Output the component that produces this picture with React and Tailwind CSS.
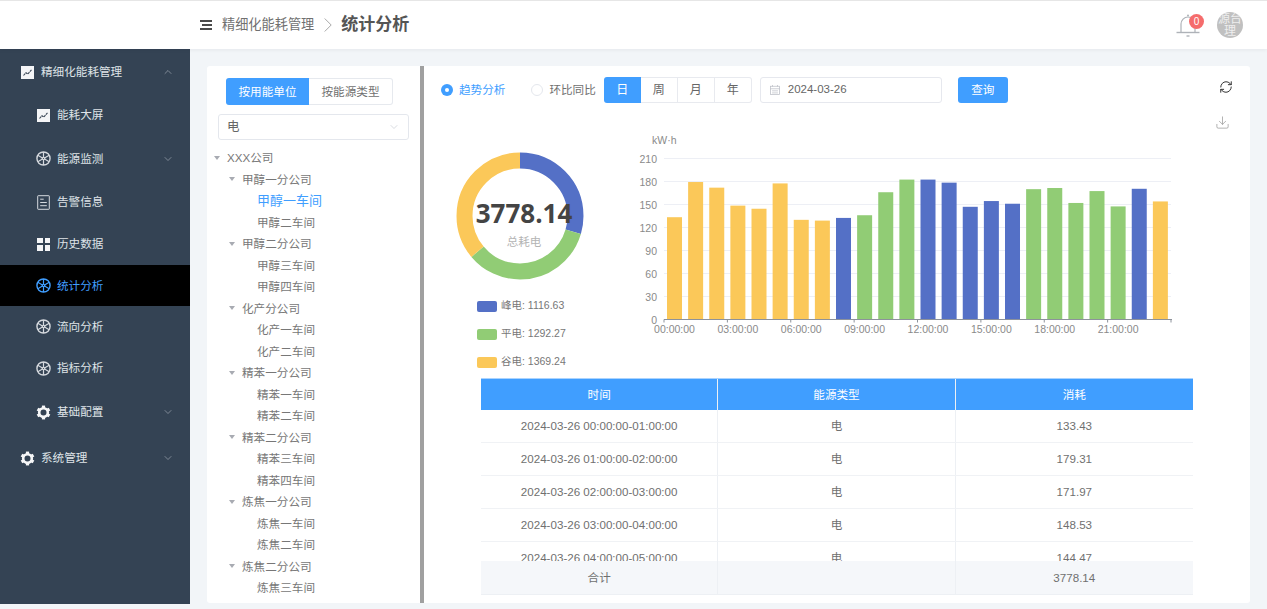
import React from "react";
import { ChevronDown, ChevronUp, RefreshCw, Download } from "lucide-react";

const FONT = "font-['Liberation_Sans','Noto_Sans_CJK_SC',sans-serif]";

const TrendIcon = () => (
  <svg viewBox="0 0 13 13" className="w-[13px] h-[13px]">
    <rect width="13" height="13" fill="#f4f5f7" />
    <path d="M2.5 9.5 5 6.8 6.8 8 10.5 3.8" fill="none" stroke="#3a4756" strokeWidth="1.1" strokeDasharray="2.4 0.6" />
  </svg>
);

const WheelIcon = ({ color = "#d5d9de" }) => (
  <svg viewBox="0 0 16 16" className="w-[15px] h-[15px]" fill="none" stroke={color} strokeWidth="1.3">
    <circle cx="8" cy="8" r="7" strokeWidth="1.5" />
    <circle cx="8" cy="8" r="1.3" />
    <path d="M8 1v5.7M8 9.3V15M1.9 4.5l5 2.9M9.1 8.6l5 2.9M14.1 4.5l-5 2.9M6.9 8.6l-5 2.9" />
  </svg>
);

const DocIcon = () => (
  <svg viewBox="0 0 13 15" className="w-[13px] h-[15px]" fill="none" stroke="#d5d9de" strokeWidth="1">
    <rect x="0.7" y="0.7" width="11.6" height="13.6" rx="0.5" />
    <path d="M3.2 4.2h3.5M3.2 7.5h6.6M3.2 10.7h6.6" />
  </svg>
);

const GridIcon = () => (
  <div className="grid grid-cols-2 gap-[2px] w-[13px] h-[13px]">
    <span className="bg-[#f4f5f7]" />
    <span className="bg-[#f4f5f7]" />
    <span className="bg-[#f4f5f7]" />
    <span className="bg-[#f4f5f7]" />
  </div>
);

const GearIcon = () => (
  <svg viewBox="0 0 16 16" className="w-[15px] h-[15px]" fill="none" stroke="#f6f7f8">
    <circle cx="8" cy="8" r="4.6" strokeWidth="2.8" />
    {[0, 60, 120, 180, 240, 300].map((a) => (
      <path key={a} d="M8 0.6v3" strokeWidth="3.4" transform={`rotate(${a} 8 8)`} />
    ))}
  </svg>
);

const BellIcon = () => (
  <svg viewBox="0 0 24 24" className="w-[24px] h-[24px]" fill="none" stroke="#aeb2b8" strokeWidth="1.2">
    <path d="M5 19v-8a7 7 0 0 1 14 0v8" />
    <path d="M0.5 19.5h23" strokeWidth="1.4" />
    <path d="M10.5 23h3" strokeWidth="1.4" />
    <circle cx="12" cy="2.6" r="1" fill="#aeb2b8" stroke="none" />
  </svg>
);

const menu = [
  { label: "精细化能耗管理", icon: <TrendIcon />, level: 0, arrow: "up", h: "h-[44px]" },
  { label: "能耗大屏", icon: <TrendIcon />, level: 1, h: "h-[42px]" },
  { label: "能源监测", icon: <WheelIcon />, level: 1, arrow: "down", h: "h-[45px]" },
  { label: "告警信息", icon: <DocIcon />, level: 1, h: "h-[42px]" },
  { label: "历史数据", icon: <GridIcon />, level: 1, h: "h-[42px]" },
  { label: "统计分析", icon: <WheelIcon color="#409eff" />, level: 1, active: true, h: "h-[41px]" },
  { label: "流向分析", icon: <WheelIcon />, level: 1, h: "h-[41px]" },
  { label: "指标分析", icon: <WheelIcon />, level: 1, h: "h-[42px]" },
  { label: "基础配置", icon: <GearIcon />, level: 1, arrow: "down", h: "h-[46px]" },
  { label: "系统管理", icon: <GearIcon />, level: 0, arrow: "down", h: "h-[46px]" },
];

const tree = [
  ["XXX公司", 0],
  ["甲醇一分公司", 1],
  ["甲醇一车间", 2, true],
  ["甲醇二车间", 2],
  ["甲醇二分公司", 1],
  ["甲醇三车间", 2],
  ["甲醇四车间", 2],
  ["化产分公司", 1],
  ["化产一车间", 2],
  ["化产二车间", 2],
  ["精苯一分公司", 1],
  ["精苯一车间", 2],
  ["精苯二车间", 2],
  ["精苯二分公司", 1],
  ["精苯三车间", 2],
  ["精苯四车间", 2],
  ["炼焦一分公司", 1],
  ["炼焦一车间", 2],
  ["炼焦二车间", 2],
  ["炼焦二分公司", 1],
  ["炼焦三车间", 2],
];

const BLUE = "#5470c6";
const GREEN = "#91cc75";
const YELLOW = "#fbc859";

const bars = [
  [133.43, YELLOW], [179.31, YELLOW], [171.97, YELLOW], [148.53, YELLOW], [144.47, YELLOW], [177.5, YELLOW],
  [130, YELLOW], [129, YELLOW], [132.5, BLUE], [136, GREEN], [166, GREEN], [182.5, GREEN],
  [182.5, BLUE], [178.5, BLUE], [147, BLUE], [154.5, BLUE], [151, BLUE], [170, GREEN],
  [171.5, GREEN], [152, GREEN], [167.5, GREEN], [147.5, GREEN], [170.5, BLUE], [154, YELLOW],
];

const rows = [
  ["2024-03-26 00:00:00-01:00:00", "电", "133.43"],
  ["2024-03-26 01:00:00-02:00:00", "电", "179.31"],
  ["2024-03-26 02:00:00-03:00:00", "电", "171.97"],
  ["2024-03-26 03:00:00-04:00:00", "电", "148.53"],
  ["2024-03-26 04:00:00-05:00:00", "电", "144.47"],
];

const BarChart = () => {
  const x0 = 34;
  const x1 = 541;
  const base = 185.5;
  const scale = 161 / 210;
  const step = (x1 - x0) / 24;
  return (
    <svg viewBox="0 0 560 200" className="w-[560px] h-[200px] shrink-0">
      <text x="22" y="10" fontSize="10.5" fill="#8a8a8a" textAnchor="start">kW·h</text>
      {[0, 30, 60, 90, 120, 150, 180, 210].map((v) => {
        const y = base - v * scale;
        return (
          <g key={v}>
            {v > 0 && <line x1={x0} x2={x1} y1={y} y2={y} stroke="#edeff5" strokeWidth={v > 150 ? 1.2 : 1} />}
            <text x="27" y={y + 4} fontSize="10.5" fill="#8a8a8a" textAnchor="end">{v}</text>
          </g>
        );
      })}
      {bars.map(([v, c], i) => (
        <rect key={i} x={x0 + i * step + 3} y={base - v * scale} width="15" height={v * scale} fill={c} />
      ))}
      <line x1={x0} x2={x1 + 1} y1={base} y2={base} stroke="#8d929b" />
      {[0, 3, 6, 9, 12, 15, 18, 21, 24].map((h) => (
        <line key={h} x1={x0 + h * step} x2={x0 + h * step} y1={base} y2={base + 3} stroke="#8d929b" />
      ))}
      {[0, 3, 6, 9, 12, 15, 18, 21].map((h) => (
        <text key={h} x={x0 + h * step + 10.5} y="199" fontSize="10.5" fill="#8a8a8a" textAnchor="middle">
          {String(h).padStart(2, "0")}:00:00
        </text>
      ))}
    </svg>
  );
};

const Donut = () => {
  const r = 55.5;
  const len = 2 * Math.PI * r;
  const parts = [
    [1116.63, BLUE],
    [1292.27, GREEN],
    [1369.24, YELLOW],
  ];
  let offset = 0;
  return (
    <div className="relative w-[128px] h-[128px]">
      <svg viewBox="0 0 128 128" className="w-full h-full -rotate-90">
        {parts.map(([v, c]) => {
          const d = (v / 3778.14) * len;
          const el = (
            <circle
              key={c}
              cx="64"
              cy="64"
              r={r}
              fill="none"
              stroke={c}
              strokeWidth="16"
              strokeDasharray={`${d} ${len - d}`}
              strokeDashoffset={-offset}
            />
          );
          offset += d;
          return el;
        })}
      </svg>
      <div className="absolute left-[4px] top-[46px] w-[128px] text-center">
        <p className="text-[26px] leading-[30px] font-bold text-[#444] font-['Open_Sans',sans-serif]">3778.14</p>
        <p className="mt-[7px] text-[11.5px] leading-[14px] text-[#b4b4b4]">总耗电</p>
      </div>
    </div>
  );
};

const Legend = ({ color, label }) => (
  <div className="flex items-center gap-[4px] h-[12px]">
    <span className="w-[20px] h-[11px] rounded-[2px]" style={{ background: color }} />
    <span className="text-[10.5px] text-[#777]">{label}</span>
  </div>
);

const Cell = ({ children, className = "" }) => (
  <div className={`flex items-center justify-center border-r border-[#edf0f4] last:border-r-0 ${className}`}>
    {children}
  </div>
);

export default function App() {
  return (
    <div className={`w-[1267px] h-[609px] overflow-hidden bg-[#f2f5f8] flex flex-col ${FONT}`}>
      <header className="h-[49px] shrink-0 bg-white border-t border-[#e6e6e6] shadow-[0_1px_4px_rgba(0,21,41,0.06)] flex items-center pl-[200px] pr-[24px] relative z-10">
        <svg viewBox="0 0 12 10" className="w-[12px] h-[10px]" fill="#4a4a4a">
          <path d="M0 0h12v2H0zM2 4h10v2H2zM0 8h12v2H0z" />
        </svg>
        <span className="ml-[10px] text-[13.2px] text-[#707070]">精细化能耗管理</span>
        <svg viewBox="0 0 8 14" className="ml-[10px] w-[8px] h-[14px]" fill="none" stroke="#a8a8a8" strokeWidth="1">
          <path d="M0.7 0.5 7.2 7 0.7 13.5" />
        </svg>
        <span className="ml-[9px] text-[17px] font-bold text-[#555]">统计分析</span>
        <div className="ml-auto flex items-center gap-[17px]">
          <div className="relative">
            <BellIcon />
            <span className="absolute top-[1px] left-[13px] w-[15px] h-[15px] rounded-full bg-[#f56c6c] text-white text-[10px] leading-[15px] text-center">0</span>
          </div>
          <div className="w-[26px] h-[26px] rounded-full bg-[#c0c0c0] text-[#eee] text-[12px] leading-[12px] text-center flex items-center justify-center overflow-hidden">
            源台<br />理
          </div>
        </div>
      </header>

      <div className="flex flex-1 min-h-0">
        <div className="w-[190px] h-[555px] shrink-0 bg-[#344354] pt-[1px] flex flex-col">
          {menu.map((m) => (
            <div
              key={m.label}
              className={`flex items-center shrink-0 ${m.h} ${m.level ? "pl-[36px]" : "pl-[20px]"} pr-[16px] ${m.active ? "bg-black" : ""}`}
            >
              <span className="w-[15px] flex justify-center">{m.icon}</span>
              <span className={`text-[11.6px] ml-[6px] ${m.active ? "text-[#409eff]" : "text-[#dfe3e8]"}`}>{m.label}</span>
              {m.arrow === "up" && <ChevronUp className="ml-auto w-[12px] h-[12px] text-[#aeb6bf]" strokeWidth={1.2} />}
              {m.arrow === "down" && <ChevronDown className="ml-auto w-[12px] h-[12px] text-[#aeb6bf]" strokeWidth={1.2} />}
            </div>
          ))}
        </div>

        <main className="flex-1 flex pl-[17px] pr-[17px] pt-[17px] pb-[6px] min-w-0">
          <div className="w-[213px] h-[537px] bg-white rounded-l-[3px] overflow-hidden shrink-0">
            <div className="flex ml-[19px] mt-[12px] h-[27px] text-[11.6px]">
              <div className="w-[83px] bg-[#409eff] text-white rounded-l-[3px] flex items-center justify-center">按用能单位</div>
              <div className="w-[84px] border border-l-0 border-[#e6e9ee] text-[#707070] rounded-r-[3px] flex items-center justify-center">按能源类型</div>
            </div>
            <div className="mx-[11px] mt-[9px] h-[26px] border border-[#e4e7ed] rounded-[3px] flex items-center justify-between px-[8px] text-[12.5px] text-[#666]">
              电
              <ChevronDown className="w-[12px] h-[12px] text-[#c0c4cc]" strokeWidth={1.2} />
            </div>
            <div className="mt-[7px]">
              {tree.map(([label, level, active]) => (
                <div
                  key={label}
                  className={`h-[21.5px] flex items-center ${level === 0 ? "pl-[7px]" : level === 1 ? "pl-[22px]" : "pl-[50px]"}`}
                >
                  {level < 2 && <span className="w-0 h-0 mr-[7px] border-x-[3px] border-x-transparent border-t-[4px] border-t-[#a8abb2]" />}
                  <span className={active ? "text-[13px] text-[#409eff]" : "text-[11.6px] text-[#777]"}>{label}</span>
                </div>
              ))}
            </div>
          </div>

          <div className="w-[4px] h-[537px] bg-[#a0a0a0] shrink-0" />

          <div className="relative flex-1 h-[537px] bg-white rounded-r-[3px] pl-[17px] pt-[11px] flex flex-col min-w-0">
            <div className="flex items-center h-[26px] text-[11.6px]">
              <span className="w-[12px] h-[12px] rounded-full bg-[#409eff] flex items-center justify-center">
                <span className="w-[4px] h-[4px] rounded-full bg-white" />
              </span>
              <span className="ml-[6px] text-[#409eff]">趋势分析</span>
              <span className="ml-[26px] w-[12px] h-[12px] rounded-full border border-[#e4e7ed]" />
              <span className="ml-[6px] text-[#707070]">环比同比</span>
              <div className="ml-[8px] flex h-[26px] text-[12px]">
                <div className="w-[37px] bg-[#409eff] text-white rounded-l-[3px] flex items-center justify-center">日</div>
                <div className="w-[37px] border-y border-r border-[#e8eaef] text-[#666] flex items-center justify-center">周</div>
                <div className="w-[37px] border-y border-r border-[#e8eaef] text-[#666] flex items-center justify-center">月</div>
                <div className="w-[37px] border-y border-r border-[#e8eaef] text-[#666] rounded-r-[3px] flex items-center justify-center">年</div>
              </div>
              <div className="ml-[8px] w-[182px] h-[26px] border border-[#e6e8ee] rounded-[3px] flex items-center pl-[9px] text-[#666]">
                <svg viewBox="0 0 12 12" className="w-[10px] h-[10px]" fill="none" stroke="#bcbfc6" strokeWidth="0.9">
                  <rect x="0.5" y="1.5" width="11" height="10" />
                  <path d="M0.5 4.5h11M3 0v2M9 0v2M2.5 7h7M2.5 9.5h7" />
                </svg>
                <span className="ml-[8px] text-[11.5px]">2024-03-26</span>
              </div>
              <div className="ml-[16px] w-[50px] h-[26px] bg-[#409eff] text-white rounded-[3px] flex items-center justify-center">查询</div>
            </div>

            <div className="absolute right-[18px] top-[14px] flex flex-col items-center gap-[21px]">
              <RefreshCw className="w-[14px] h-[14px] text-[#333] translate-x-[1px]" strokeWidth={1.7} />
              <Download className="w-[15px] h-[15px] text-[#9a9a9a] -translate-x-[2px]" strokeWidth={1.2} />
            </div>

            <div className="flex mt-[31px] h-[200px]">
              <div className="w-[192px] shrink-0">
                <div className="ml-[15px] mt-[18px]">
                  <Donut />
                </div>
                <div className="ml-[36px] mt-[20px] flex flex-col gap-[16px]">
                  <Legend color={BLUE} label="峰电: 1116.63" />
                  <Legend color={GREEN} label="平电: 1292.27" />
                  <Legend color={YELLOW} label="谷电: 1369.24" />
                </div>
              </div>
              <div className="-ml-[3px]">
                <BarChart />
              </div>
            </div>

            <div className="ml-[40px] mt-[44px] w-[712px] text-[11.6px] text-[#707070]">
              <div className="grid grid-cols-3 h-[32px] bg-[#409eff] text-white border-t border-[#a9d3ff]">
                <Cell className="border-[#66b1ff]">时间</Cell>
                <Cell className="border-[#66b1ff]">能源类型</Cell>
                <Cell>消耗</Cell>
              </div>
              <div className="h-[151px] overflow-hidden">
                {rows.map((r) => (
                  <div key={r[0]} className="grid grid-cols-3 h-[33px] border-b border-[#f0f2f5]">
                    <Cell>{r[0]}</Cell>
                    <Cell>{r[1]}</Cell>
                    <Cell>{r[2]}</Cell>
                  </div>
                ))}
              </div>
              <div className="grid grid-cols-3 h-[34px] bg-[#f5f7fa] border-b border-[#edf0f4]">
                <Cell>合计</Cell>
                <Cell />
                <Cell>3778.14</Cell>
              </div>
            </div>
          </div>
        </main>
      </div>
    </div>
  );
}
